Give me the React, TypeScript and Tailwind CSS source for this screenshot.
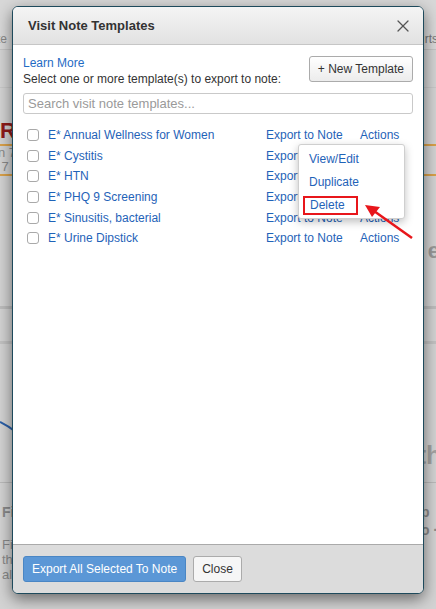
import { X } from "lucide-react";

const templates = [
  "E* Annual Wellness for Women",
  "E* Cystitis",
  "E* HTN",
  "E* PHQ 9 Screening",
  "E* Sinusitis, bacterial",
  "E* Urine Dipstick",
];

const font = { fontFamily: '"Liberation Sans", Arial, Helvetica, sans-serif' };

// dimmed page that sits behind the dialog
const Backdrop = () => (
  <div className="absolute inset-0 overflow-hidden bg-[#d3d3d3] text-[#8a8a8a]">
    <div className="h-[50px] bg-[#d8d8d8] border-b border-[#c4c4c4] flex items-end justify-between pb-[4px] text-[12px] leading-none">
      <span className="-ml-[3px]">te</span>
      <span className="-mr-[2px] text-[#777]">rts</span>
    </div>
    <div className="mt-[37px] h-px bg-[#c8c8c8]" />
    <div className="mt-[30px] text-[22px] leading-[26px] font-bold text-[#8e1a1a]">R</div>
    <div className="h-[2px] bg-[#d9a14a]" />
    <div className="text-[13px] leading-[14px] -ml-[2px]">n 7<br />&nbsp;7</div>
    <div className="h-[2px] bg-[#d9a14a]" />
    <div className="mt-[62px] text-right -mr-[4px] text-[22px] leading-[26px] font-bold text-[#9a9a9a]">e</div>
    <div className="mt-[42px] h-[3px] bg-[#bdbdbd]" />
    <div className="mt-[32px] h-[3px] bg-[#c2c2c2]" />
    <svg className="mt-[74px] block" width="20" height="20" viewBox="0 0 20 20">
      <path d="M0 4 Q8 8 16 14" stroke="#2a5fa8" strokeWidth="2" fill="none" />
    </svg>
    <div className="mt-[2px] text-right -mr-[6px] text-[26px] leading-[30px] font-bold text-[#a3a3a3]">th</div>
    <div className="mt-[12px] h-px bg-[#bababa]" />
    <div className="mt-[20px] flex justify-between text-[14px] font-bold leading-[18px]">
      <span className="ml-[2px]">Fi</span>
      <span className="-mr-[2px]">p<br />o ·</span>
    </div>
    <div className="mt-[-2px] ml-[2px] text-[13px] leading-[15px]">Fi<br />th<br />al</div>
  </div>
);

const ActionsMenu = () => (
  <div className="absolute left-[285px] top-[99px] w-[107px] h-[75px] bg-white border border-[#cfcfcf] rounded-[3px] shadow-[0_3px_8px_rgba(0,0,0,0.25)] pt-[3px] text-[12px] text-[#1f63b8]">
    <div className="h-[23px] leading-[23px] pl-[10px]">View/Edit</div>
    <div className="h-[23px] leading-[23px] pl-[10px]">Duplicate</div>
    <div className="h-[23px] pl-[4px] flex items-center">
      <span className="h-[19px] w-[55px] pl-[5px] leading-[15px] border-2 border-[#e8161b]">Delete</span>
    </div>
  </div>
);

export default function App() {
  return (
    <div className="relative w-[436px] h-[609px] overflow-hidden" style={font}>
      <Backdrop />

      <div className="absolute left-[12px] top-[6px] w-[412px] h-[588px] flex flex-col bg-white border border-[#1e4a5c] rounded-[6px] overflow-hidden shadow-[0_5px_15px_rgba(0,0,0,0.5)]">
        {/* Header */}
        <div className="h-[38px] shrink-0 flex items-center justify-between pl-[15px] pr-[10px] bg-gradient-to-b from-[#f4f4f4] to-[#e2e2e2] border-b border-[#c6c6c6]">
          <h3 className="text-[13px] font-bold text-[#333]">Visit Note Templates</h3>
          <X className="w-[20px] h-[20px] text-[#555]" strokeWidth={1.5} />
        </div>

        {/* Body */}
        <div className="relative flex-1 px-[10px] pt-[10px]">
          <div className="flex items-start justify-between">
            <div className="text-[12px] leading-[16px]">
              <div className="text-[#1f6bc4]">Learn More</div>
              <div className="text-[#333]">Select one or more template(s) to export to note:</div>
            </div>
            <button className="mt-[1px] h-[26px] px-[8px] text-[12px] text-[#333] border border-[#ababab] rounded-[3px] bg-gradient-to-b from-white to-[#ececec]">
              + New Template
            </button>
          </div>

          <div className="mt-[6px] h-[21px] border border-[#c9c9c9] rounded-[3px] px-[4px] flex items-center text-[13px] text-[#9a9a9a]">
            Search visit note templates...
          </div>

          <div className="mt-[11px]">
            {templates.map((name) => (
              <div key={name} className="flex items-center h-[20.6px] text-[12px] text-[#1f63b8]">
                <span className="ml-[4px] w-[12px] h-[12px] rounded-[3px] border border-[#a9a9a9] bg-white" />
                <span className="ml-[9px] w-[218px]">{name}</span>
                <span className="w-[94px]">Export to Note</span>
                <span>Actions</span>
              </div>
            ))}
          </div>

          <ActionsMenu />
        </div>

        {/* Footer */}
        <div className="h-[49px] shrink-0 flex items-center gap-[7px] px-[10px] bg-[#dcdcdc] border-t border-[#aaaaaa]">
          <button className="h-[26px] px-[8px] text-[12px] text-white bg-[#5b97d6] border border-[#4a86c4] rounded-[3px]">
            Export All Selected To Note
          </button>
          <button className="h-[26px] px-[8px] text-[12px] text-[#333] bg-[#f6f6f6] border border-[#ababab] rounded-[3px]">
            Close
          </button>
        </div>
      </div>

      {/* annotation arrow */}
      <svg className="absolute left-[360px] top-[198px]" width="60" height="46" viewBox="0 0 60 46">
        <line x1="52" y1="40" x2="14" y2="13" stroke="#e8161b" strokeWidth="2.5" />
        <polygon points="5,7 20,9 12,19" fill="#e8161b" />
      </svg>
    </div>
  );
}
